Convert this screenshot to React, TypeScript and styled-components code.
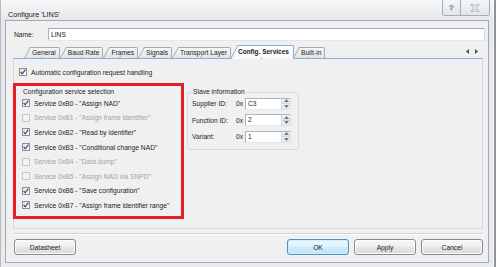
import React from "react";
import styled, { createGlobalStyle } from "styled-components";

const GlobalStyle = createGlobalStyle`
  html, body {
    margin: 0;
    padding: 0;
    background: #ffffff;
  }
  body {
    font-family: "Liberation Sans", Arial, sans-serif;
    font-size: 6.7px;
    color: #1c1c1c;
  }
`;

const tabs = [
  "General",
  "Baud Rate",
  "Frames",
  "Signals",
  "Transport Layer",
  "Config. Services",
  "Built-in",
];

const services = [
  { code: "0xB0", name: "Assign NAD", on: true, enabled: true },
  { code: "0xB1", name: "Assign frame identifier", on: false, enabled: false },
  { code: "0xB2", name: "Read by identifier", on: true, enabled: true },
  { code: "0xB3", name: "Conditional change NAD", on: true, enabled: true },
  { code: "0xB4", name: "Data dump", on: false, enabled: false },
  { code: "0xB5", name: "Assign NAD via SNPD", on: false, enabled: false },
  { code: "0xB6", name: "Save configuration", on: true, enabled: true },
  { code: "0xB7", name: "Assign frame identifier range", on: true, enabled: true },
];

const slaveInfo = [
  { label: "Supplier ID:", value: "C3" },
  { label: "Function ID:", value: "2" },
  { label: "Variant:", value: "1" },
];

const CheckBox = ({ on, enabled = true }: { on: boolean; enabled?: boolean }) => (
  <Box $enabled={enabled}>
    {on && (
      <svg width="8" height="8" viewBox="0 0 8 8">
        <path d="M1.6 3.9 L3.2 5.8 L6.4 1.6" fill="none" stroke="#34498a" strokeWidth="1.2" />
      </svg>
    )}
  </Box>
);

const SpinBox = ({ value }: { value: string }) => (
  <Spin>
    <SpinText>{value}</SpinText>
    <SpinButtons>
      <SpinHalf>
        <svg width="5" height="3" viewBox="0 0 5 3">
          <path d="M0 3 L2.5 0 L5 3 Z" fill="#6b7a8c" />
        </svg>
      </SpinHalf>
      <SpinHalf>
        <svg width="5" height="3" viewBox="0 0 5 3">
          <path d="M0 0 L2.5 3 L5 0 Z" fill="#6b7a8c" />
        </svg>
      </SpinHalf>
    </SpinButtons>
  </Spin>
);

const App = () => {
  return (
    <>
      <GlobalStyle />
      <Window>
        <TitleBar>
          <Title>Configure 'LINS'</Title>
          <CaptionButtons>
            <CaptionButton $w={17}>
              <HelpGlyph>?</HelpGlyph>
            </CaptionButton>
            <CaptionButton $w={28}>
              <svg width="10" height="8" viewBox="0 0 10 8">
                <path
                  d="M1 0.5 H3.2 L5 2.6 L6.8 0.5 H9 L6.2 4 L9 7.5 H6.8 L5 5.4 L3.2 7.5 H1 L3.8 4 Z"
                  fill="#f6f7f8"
                  stroke="#9aa1aa"
                  strokeWidth="0.8"
                />
              </svg>
            </CaptionButton>
          </CaptionButtons>
        </TitleBar>

        <Client>
          <NameRow>
            <NameLabel>Name:</NameLabel>
            <TextField>LINS</TextField>
          </NameRow>

          <TabStrip>
            {tabs.map((t) => (
              <Tab key={t} $active={t === "Config. Services"}>
                <TabText $active={t === "Config. Services"}>{t}</TabText>
              </Tab>
            ))}
            <ScrollArrows>
              <svg width="3" height="5" viewBox="0 0 3 5">
                <path d="M3 0 L0 2.5 L3 5 Z" fill="#505050" />
              </svg>
              <svg width="3" height="5" viewBox="0 0 3 5">
                <path d="M0 0 L3 2.5 L0 5 Z" fill="#505050" />
              </svg>
            </ScrollArrows>
          </TabStrip>

          <Panel>
            <CheckRow>
              <CheckBox on />
              <span>Automatic configuration request handling</span>
            </CheckRow>

            <Columns>
              <Highlight>
                <GroupLabel>Configuration service selection</GroupLabel>
                {services.map((s) => (
                  <ServiceRow key={s.code} $enabled={s.enabled}>
                    <CheckBox on={s.on} enabled={s.enabled} />
                    <span>
                      Service {s.code} - "{s.name}"
                    </span>
                  </ServiceRow>
                ))}
              </Highlight>

              <SlaveGroup>
                <Legend>Slave information</Legend>
                {slaveInfo.map((r) => (
                  <SlaveRow key={r.label}>
                    <SlaveLabel>{r.label}</SlaveLabel>
                    <HexPrefix>0x</HexPrefix>
                    <SpinBox value={r.value} />
                  </SlaveRow>
                ))}
              </SlaveGroup>
            </Columns>
          </Panel>

          <Separator />

          <ButtonRow>
            <PushButton>Datasheet</PushButton>
            <RightButtons>
              <PushButton $default>OK</PushButton>
              <PushButton>Apply</PushButton>
              <PushButton>Cancel</PushButton>
            </RightButtons>
          </ButtonRow>
        </Client>
      </Window>
    </>
  );
};

export default App;

const Window = styled.div`
  width: 496px;
  height: 267px;
  box-sizing: border-box;
  display: flex;
  flex-direction: column;
  padding: 0 5px 4px 4px;
  background: linear-gradient(#f6f7f8, #e6e8eb 20px, #e9ebee);
  border-left: 1px solid #b5bac1;
  border-right: 2px solid #8f949b;
  box-shadow: inset -1px 0 0 #f7f8f9;
`;

const TitleBar = styled.div`
  height: 20px;
  display: flex;
  align-items: flex-start;
  justify-content: space-between;
  flex-shrink: 0;
`;

const Title = styled.div`
  font-size: 7.2px;
  padding: 10px 0 0 3px;
  color: #1b1b1b;
`;

const CaptionButtons = styled.div`
  display: flex;
  border: 1px solid #a7adb5;
  border-top: none;
  border-radius: 0 0 3px 3px;
  overflow: hidden;
  margin-right: -1px;
`;

const CaptionButton = styled.div<{ $w: number }>`
  width: ${(p) => p.$w}px;
  height: 15px;
  display: flex;
  align-items: center;
  justify-content: center;
  background: linear-gradient(#f5f6f8, #e3e6ea);
  & + & {
    border-left: 1px solid #a7adb5;
  }
`;

const HelpGlyph = styled.span`
  font-size: 8px;
  font-weight: bold;
  color: #f4f5f6;
  -webkit-text-stroke: 0.6px #8d949d;
`;

const Client = styled.div`
  flex: 1;
  display: flex;
  flex-direction: column;
  background: #f0f0f0;
  border: 1px solid #a4aab2;
`;

const NameRow = styled.div`
  display: flex;
  align-items: center;
  height: 13px;
  margin: 7px 3px 0 8px;
`;

const NameLabel = styled.span`
  width: 34px;
`;

const TextField = styled.div`
  flex: 1;
  height: 13px;
  box-sizing: border-box;
  display: flex;
  align-items: center;
  padding-left: 2px;
  background: #fff;
  border: 1px solid #abb5c4;
  border-top-color: #9ea8b6;
  border-right-color: #d5dde8;
  border-bottom-color: #e0e7ef;
`;

const TabStrip = styled.div`
  display: flex;
  align-items: flex-end;
  height: 13px;
  margin: 4px 0 0 18px;
`;

const Tab = styled.div<{ $active?: boolean }>`
  position: relative;
  height: ${(p) => (p.$active ? 13 : 11)}px;
  box-sizing: border-box;
  display: flex;
  align-items: center;
  padding: 0 ${(p) => (p.$active ? 5 : 4)}px 0 8px;
  margin: 0 ${(p) => (p.$active ? -1 : 0)}px;
  z-index: ${(p) => (p.$active ? 2 : 1)};
  &::before,
  &::after {
    content: "";
    position: absolute;
    top: 0;
    bottom: ${(p) => (p.$active ? -1 : 0)}px;
    box-sizing: border-box;
    border: 1px solid ${(p) => (p.$active ? "#86aede" : "#a5a9b0")};
    border-bottom: none;
    background: ${(p) =>
      p.$active
        ? "linear-gradient(#ffffff, #f6f8fb)"
        : "linear-gradient(#f6f6f6, #e4e5e7)"};
  }
  &::before {
    left: 0;
    right: 50%;
    transform: skewX(-29deg);
    transform-origin: bottom left;
  }
  &::after {
    left: 50%;
    right: 0;
    border-left: none;
    border-top-right-radius: 2px;
  }
`;

const TabText = styled.span<{ $active?: boolean }>`
  position: relative;
  z-index: 1;
  white-space: nowrap;
  font-weight: ${(p) => (p.$active ? "bold" : "normal")};
  font-size: ${(p) => (p.$active ? "6.5px" : "6.7px")};
`;

const ScrollArrows = styled.div`
  margin-left: auto;
  margin-right: 10px;
  align-self: center;
  display: flex;
  gap: 6px;
`;

const Panel = styled.div`
  height: 171px;
  box-sizing: border-box;
  margin: 0 5px 0 7px;
  padding: 0 5px;
  border: 1px solid #d6d8dc;
  border-top-color: #86aede;
  display: flex;
  flex-direction: column;
`;

const CheckRow = styled.div`
  display: flex;
  align-items: center;
  gap: 4px;
  height: 10px;
  margin-top: 8px;
`;

const Box = styled.div<{ $enabled: boolean }>`
  width: 8px;
  height: 8px;
  box-sizing: border-box;
  flex-shrink: 0;
  display: flex;
  align-items: center;
  justify-content: center;
  border: 1px solid ${(p) => (p.$enabled ? "#8e8f8f" : "#c6c6c6")};
  background: ${(p) =>
    p.$enabled ? "linear-gradient(135deg, #e2e2e2, #ffffff)" : "#f4f4f4"};
  svg {
    margin: -1px;
  }
`;

const Columns = styled.div`
  display: flex;
  align-items: flex-start;
  margin: 6px 0 0 -6px;
`;

const Highlight = styled.div`
  width: 171px;
  height: 136px;
  box-sizing: border-box;
  border: 3px solid #e51d26;
  display: flex;
  flex-direction: column;
`;

const GroupLabel = styled.div`
  height: 8px;
  line-height: 8px;
  margin-top: 2px;
  padding-left: 7px;
`;

const ServiceRow = styled.div<{ $enabled: boolean }>`
  display: flex;
  align-items: center;
  gap: 4px;
  height: 14.6px;
  padding-left: 6px;
  color: ${(p) => (p.$enabled ? "#1c1c1c" : "#a3a3a3")};
  white-space: nowrap;
`;

const SlaveGroup = styled.fieldset`
  width: 112px;
  box-sizing: border-box;
  margin: 5px 0 0 3px;
  padding: 0 5px 6px 4px;
  border: 1px solid #d5dbe1;
  border-radius: 3px;
  display: flex;
  flex-direction: column;
  gap: 3.5px;
`;

const Legend = styled.legend`
  padding: 0 1px;
  height: 8px;
  line-height: 8px;
`;

const SlaveRow = styled.div`
  display: flex;
  align-items: center;
  height: 13px;
  &:first-of-type {
    margin-top: 1px;
  }
`;

const SlaveLabel = styled.span`
  width: 44px;
  white-space: nowrap;
`;

const HexPrefix = styled.span`
  width: 9px;
`;

const Spin = styled.div`
  width: 46px;
  height: 12px;
  box-sizing: border-box;
  display: flex;
  background: #fff;
  border: 1px solid #abb5c4;
  border-right-color: #d5dde8;
  border-bottom-color: #e0e7ef;
`;

const SpinText = styled.span`
  flex: 1;
  padding-left: 2px;
  line-height: 10px;
`;

const SpinButtons = styled.div`
  width: 9px;
  display: flex;
  flex-direction: column;
`;

const SpinHalf = styled.div`
  flex: 1;
  display: flex;
  align-items: center;
  justify-content: center;
  background: linear-gradient(#f3f4f6, #e4e6e9);
  border-left: 1px solid #d4d8dd;
  & + & {
    border-top: 1px solid #d4d8dd;
  }
`;

const Separator = styled.div`
  height: 1px;
  margin: 4px 5px 0 8px;
  background: #d3d3d3;
  box-shadow: 0 1px 0 #ffffff;
`;

const ButtonRow = styled.div`
  display: flex;
  justify-content: space-between;
  margin: 5px 5px 0 8px;
`;

const RightButtons = styled.div`
  display: flex;
  gap: 5px;
`;

const PushButton = styled.div<{ $default?: boolean }>`
  width: 62px;
  height: 16px;
  box-sizing: border-box;
  display: flex;
  align-items: center;
  justify-content: center;
  border-radius: 3px;
  border: 1px solid ${(p) => (p.$default ? "#4f90c2" : "#8a8a8a")};
  background: ${(p) =>
    p.$default
      ? "linear-gradient(#eef8fe 0%, #e0f2fc 50%, #cdebfc 51%, #bfe3f7 100%)"
      : "linear-gradient(#f6f6f6 0%, #efefef 50%, #e5e5e5 51%, #dcdcdc 100%)"};
  box-shadow: inset 0 0 0 1px ${(p) => (p.$default ? "#d2eefc" : "#fcfcfc")};
`;
